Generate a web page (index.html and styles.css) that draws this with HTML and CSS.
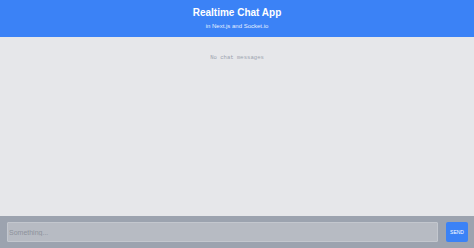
FILE: index.html
```html
<!DOCTYPE html>
<html>
<head>
<meta charset="utf-8">
<link rel="stylesheet" href="styles.css">
</head>
<body>
<div class="app">
  <header class="header">
    <h1 class="title">Realtime Chat App</h1>
    <p class="subtitle">in Next.js and Socket.io</p>
  </header>
  <main class="messages">
    <p class="empty">No chat messages</p>
  </main>
  <footer class="composer">
    <input class="input" type="text" placeholder="Something...">
    <button class="send">SEND</button>
  </footer>
</div>
</body>
</html>
```
FILE: styles.css
```css
html, body {
  margin: 0;
  padding: 0;
  height: 100%;
}
body {
  font-family: "Liberation Sans", Arial, sans-serif;
}
.app {
  display: flex;
  flex-direction: column;
  height: 248px;
}
.header {
  background: #3b82f6;
  height: 37px;
  display: flex;
  flex-direction: column;
  align-items: center;
  justify-content: center;
  color: #fff;
  gap: 5px;
  box-sizing: border-box;
  padding-bottom: 1px;
}
.title {
  margin: 0;
  font-size: 10px;
  font-weight: bold;
  line-height: 11px;
}
.subtitle {
  margin: 0;
  font-size: 6px;
  line-height: 7px;
  color: #e6eefe;
}
.messages {
  flex: 1;
  background: #e6e7ea;
  display: flex;
  flex-direction: column;
  align-items: center;
  padding-top: 17px;
}
.empty {
  margin: 0;
  font-family: "Liberation Mono", "Courier New", monospace;
  font-size: 5.6px;
  color: #9ca3af;
}
.composer {
  height: 32px;
  box-sizing: border-box;
  background: #9ca3af;
  display: flex;
  align-items: center;
  padding: 0 6px 0 7px;
  gap: 8px;
}
.input {
  flex: 1;
  height: 20px;
  box-sizing: border-box;
  background: #b7bbc3;
  border: 1px solid #c3c7ce;
  border-radius: 1px;
  padding: 0 1px;
  font-family: "Liberation Sans", Arial, sans-serif;
  font-size: 7px;
  color: #6b7280;
  outline: none;
}
.input::placeholder {
  color: #8d929b;
}
.send {
  width: 22px;
  height: 20px;
  border: none;
  border-radius: 2px;
  background: #3b82f6;
  color: #fff;
  font-family: "Liberation Sans", Arial, sans-serif;
  font-size: 5px;
  padding: 0;
}
```
